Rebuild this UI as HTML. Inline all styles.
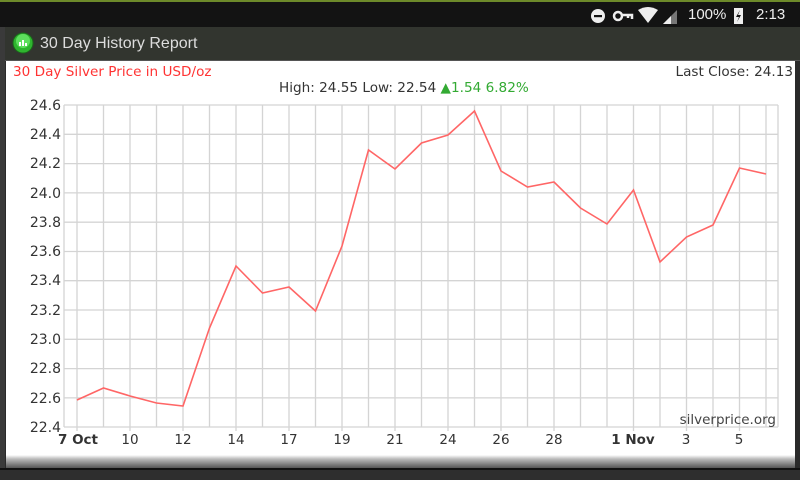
<!DOCTYPE html>
<html><head><meta charset="utf-8"><style>
*{margin:0;padding:0;box-sizing:border-box}
body{width:800px;height:480px;overflow:hidden;background:#2a2a2a;font-family:"Liberation Sans",sans-serif;position:relative}
.status{position:absolute;left:0;top:0;width:800px;height:27px;background:#131313;border-top:2px solid #6d8a2a}
.title{position:absolute;left:5px;top:27px;width:795px;height:34px;background:#32352f;border-bottom:1px solid #555}
.lstrip{position:absolute;left:0;top:27px;width:5px;height:453px;background:#3a3a3a}
.white{position:absolute;left:6px;top:61px;width:789px;height:395px;background:#fff}
.grad{position:absolute;left:6px;top:455px;width:789px;height:13px;background:linear-gradient(#fff,#bbb 30%,#555)}
.bot{position:absolute;left:0;top:468px;width:800px;height:12px;background:#2e2e2e;border-top:2px solid #111}
.t{position:absolute;white-space:nowrap}
.dv{font-family:"DejaVu Sans",sans-serif;font-size:13.6px}
</style></head><body>
<div class="status">
<svg width="800" height="25" style="position:absolute;left:0;top:0">
<circle cx="598" cy="14" r="7" fill="#eee"/><rect x="594" y="13" width="8" height="2.2" fill="#131313"/>
<circle cx="618" cy="14" r="4" fill="none" stroke="#eee" stroke-width="2.5"/><path d="M622 13h10v4M628 13v3" stroke="#eee" stroke-width="2.5" fill="none"/>
<path d="M638 8 Q648 2 658 8 L648 21Z" fill="#eee"/>
<path d="M663 22 L677 8 L677 22Z" fill="#777"/><path d="M663 22 L671 14 L671 22Z" fill="#eee"/>
<rect x="734" y="6" width="9" height="16" fill="#eee"/><path d="M740 8 L736 15 L739 15 L737 20 L741 13 L738 13Z" fill="#131313"/>
</svg>
<div class="t" style="left:688px;top:4px;color:#eee;font-size:15px">100%</div>
<div class="t" style="left:756px;top:4px;color:#eee;font-size:15px">2:13</div>
</div>
<div class="lstrip"></div>
<div class="title">
<svg width="26" height="26" style="position:absolute;left:6px;top:4px"><circle cx="12" cy="12" r="10" fill="#2fb52f" stroke="#1a6a1a"/><circle cx="12" cy="10" r="7" fill="#5ddf5d"/><rect x="8" y="11" width="2" height="4" fill="#fff"/><rect x="11" y="9" width="2" height="6" fill="#fff"/><rect x="14" y="12" width="2" height="3" fill="#fff"/></svg>
<div class="t" style="left:35px;top:8px;color:#ddd;font-size:16px">30 Day History Report</div>
</div>
<div class="white"></div>
<div class="grad"></div>
<div class="bot"></div>
<div class="t dv" style="left:13px;top:64px;color:#f33">30 Day Silver Price in USD/oz</div>
<div class="t dv" style="right:7px;top:64px;color:#333">Last Close: 24.13</div>
<div class="t dv" style="left:279px;top:80px;color:#333">High: 24.55 Low: 22.54 <span style="color:#3a3">▲1.54 6.82%</span></div>
<svg width="800" height="480" style="position:absolute;left:0;top:0" font-family="DejaVu Sans, sans-serif">
<g stroke="#d4d4d4" stroke-width="1.3">
<line x1="64" y1="105" x2="778" y2="105"/><line x1="64" y1="134.3" x2="778" y2="134.3"/><line x1="64" y1="163.6" x2="778" y2="163.6"/><line x1="64" y1="192.9" x2="778" y2="192.9"/><line x1="64" y1="222.2" x2="778" y2="222.2"/><line x1="64" y1="251.5" x2="778" y2="251.5"/><line x1="64" y1="280.7" x2="778" y2="280.7"/><line x1="64" y1="310" x2="778" y2="310"/><line x1="64" y1="339.3" x2="778" y2="339.3"/><line x1="64" y1="368.6" x2="778" y2="368.6"/><line x1="64" y1="397.9" x2="778" y2="397.9"/><line x1="64" y1="427" x2="778" y2="427"/>
<line x1="64" y1="105" x2="64" y2="427"/><line x1="778" y1="105" x2="778" y2="427"/>
<line x1="77" y1="105" x2="77" y2="431"/><line x1="103.5" y1="105" x2="103.5" y2="427"/><line x1="130" y1="105" x2="130" y2="431"/><line x1="156.5" y1="105" x2="156.5" y2="427"/><line x1="183" y1="105" x2="183" y2="431"/><line x1="209.5" y1="105" x2="209.5" y2="427"/><line x1="236" y1="105" x2="236" y2="431"/><line x1="262.5" y1="105" x2="262.5" y2="427"/><line x1="289" y1="105" x2="289" y2="431"/><line x1="315.5" y1="105" x2="315.5" y2="427"/><line x1="342" y1="105" x2="342" y2="431"/><line x1="368.5" y1="105" x2="368.5" y2="427"/><line x1="395" y1="105" x2="395" y2="431"/><line x1="421.5" y1="105" x2="421.5" y2="427"/><line x1="448" y1="105" x2="448" y2="431"/><line x1="474.5" y1="105" x2="474.5" y2="427"/><line x1="501" y1="105" x2="501" y2="431"/><line x1="527.5" y1="105" x2="527.5" y2="427"/><line x1="554" y1="105" x2="554" y2="431"/><line x1="580.5" y1="105" x2="580.5" y2="427"/><line x1="607" y1="105" x2="607" y2="427"/><line x1="633.5" y1="105" x2="633.5" y2="431"/><line x1="660" y1="105" x2="660" y2="427"/><line x1="686.5" y1="105" x2="686.5" y2="431"/><line x1="713" y1="105" x2="713" y2="427"/><line x1="739.5" y1="105" x2="739.5" y2="431"/><line x1="766" y1="105" x2="766" y2="427"/>
</g>
<polyline fill="none" stroke="#f66" stroke-width="1.6" points="77,400 103.5,388 130,396 156.5,403 183,406 209.5,328 236,266 262.5,293 289,287 315.5,311 342,246 368.5,150 395,169 421.5,143 448,135 474.5,111 501,171 527.5,187 554,182 580.5,208 607,224 633.5,190 660,262 686.5,237 713,225 739.5,168 766,174"/>
<g font-size="14" fill="#333" text-anchor="end">
<text x="61" y="110">24.6</text><text x="61" y="139">24.4</text><text x="61" y="168">24.2</text><text x="61" y="198">24.0</text><text x="61" y="227">23.8</text><text x="61" y="256">23.6</text><text x="61" y="285">23.4</text><text x="61" y="315">23.2</text><text x="61" y="344">23.0</text><text x="61" y="373">22.8</text><text x="61" y="403">22.6</text><text x="61" y="432">22.4</text>
</g>
<g font-size="13.5" fill="#333" text-anchor="middle">
<text x="78" y="444" font-weight="bold">7 Oct</text><text x="130" y="444">10</text><text x="183" y="444">12</text><text x="236" y="444">14</text><text x="289" y="444">17</text><text x="342" y="444">19</text><text x="395" y="444">21</text><text x="448" y="444">24</text><text x="501" y="444">26</text><text x="554" y="444">28</text><text x="633" y="444" font-weight="bold">1 Nov</text><text x="686" y="444">3</text><text x="739" y="444">5</text>
</g>
<text x="776" y="424" font-size="13.5" fill="#444" text-anchor="end">silverprice.org</text>
</svg>
</body></html>
